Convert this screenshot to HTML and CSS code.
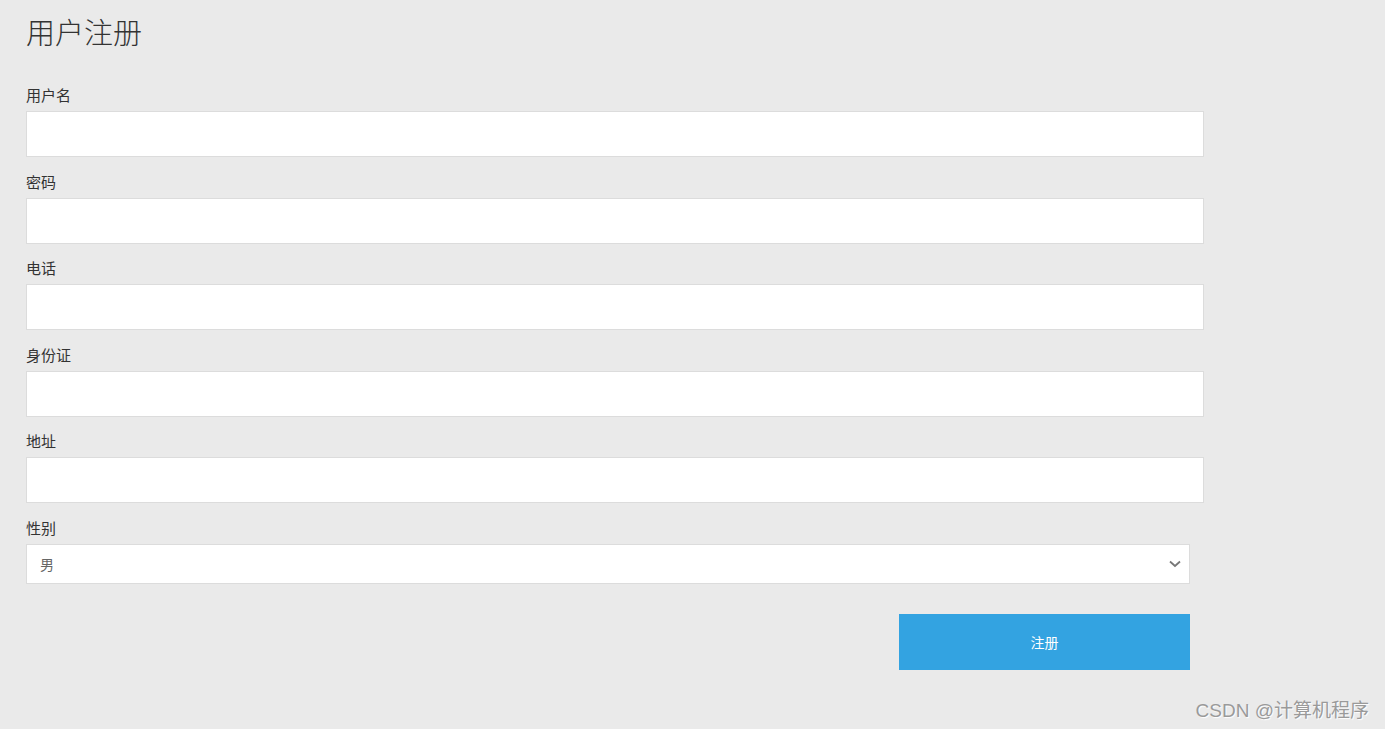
FILE: index.html
```html
<!DOCTYPE html>
<html lang="zh-CN">
<head>
<meta charset="utf-8">
<title>用户注册</title>
<link rel="stylesheet" href="styles.css">
</head>
<body>
<div class="page">
  <h1 class="title">用户注册</h1>
  <form class="form">
    <div class="group">
      <label class="label">用户名</label>
      <input class="input" type="text">
    </div>
    <div class="group">
      <label class="label">密码</label>
      <input class="input" type="password">
    </div>
    <div class="group">
      <label class="label">电话</label>
      <input class="input" type="text">
    </div>
    <div class="group">
      <label class="label">身份证</label>
      <input class="input" type="text">
    </div>
    <div class="group">
      <label class="label">地址</label>
      <input class="input" type="text">
    </div>
    <div class="group group-select">
      <label class="label">性别</label>
      <div class="select">
        <span class="select-value">男</span>
        <svg class="chev" width="12" height="8" viewBox="0 0 12 8"><path d="M1 1.5 L6 6 L11 1.5" fill="none" stroke="#777" stroke-width="1.8"/></svg>
      </div>
    </div>
    <div class="actions">
      <button type="button" class="btn">注册</button>
    </div>
  </form>
</div>
<div class="watermark">CSDN @计算机程序</div>
</body>
</html>
```

FILE: styles.css
```css
html, body {
  margin: 0;
  padding: 0;
  background: #eaeaea;
  height: 100%;
}
body {
  font-family: "Noto Sans CJK SC", "Liberation Sans", sans-serif;
  color: #333;
  position: relative;
  overflow: hidden;
}
.page {
  padding: 11px 26px 0 26px;
  width: 1178px;
}
.title {
  margin: 0;
  font-size: 29px;
  font-weight: 300;
  line-height: 40px;
  color: #333;
}
.form {
  margin-top: 34px;
  display: flex;
  flex-direction: column;
}
.group {
  display: flex;
  flex-direction: column;
  margin-bottom: 14.5px;
}
.label {
  font-size: 15px;
  line-height: 20px;
  margin-bottom: 6px;
  color: #333;
}
.input {
  box-sizing: border-box;
  height: 46px;
  width: 1178px;
  border: 1px solid #dcdcdc;
  background: #fff;
  margin: 0;
  outline: none;
}
.select {
  box-sizing: border-box;
  width: 1164px;
  height: 40px;
  border: 1px solid #dcdcdc;
  background: #fff;
  display: flex;
  align-items: center;
  justify-content: space-between;
  padding: 0 8px 0 13px;
}
.select-value {
  font-size: 14px;
  color: #666;
}
.chev {
  display: block;
}
.actions {
  width: 1164px;
  display: flex;
  justify-content: flex-end;
  margin-top: 16px;
}
.btn {
  width: 291px;
  height: 56px;
  border: none;
  background: #33a3e1;
  color: #fff;
  font-family: "Noto Sans CJK SC", sans-serif;
  font-size: 14px;
  cursor: pointer;
}
.watermark {
  position: absolute;
  right: 16px;
  bottom: 7px;
  font-size: 19px;
  color: #9a9a9a;
  text-shadow: 1px 1px 1px #fff;
  font-family: "Liberation Sans", "Noto Sans CJK SC", sans-serif;
}
```
